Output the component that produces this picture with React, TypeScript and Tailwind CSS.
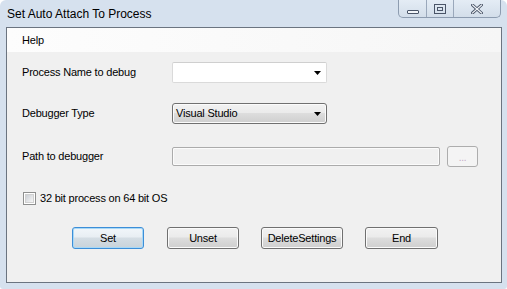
import React from 'react'

const font = { fontFamily: '"Liberation Sans", Arial, sans-serif' }

function Arrow() {
  return (
    <svg width="7" height="4" viewBox="0 0 7 4" className="shrink-0">
      <path d="M0 0H7L3.5 4Z" fill="#000" />
    </svg>
  )
}

function WinButton({ label, width, className = '', focused }: {
  label: string
  width: string
  className?: string
  focused?: boolean
}) {
  return (
    <div
      className={`h-[22px] ${width} ${className} rounded-[3px] border flex items-center justify-center text-[11px] tracking-[-0.2px] text-black ${
        focused
          ? 'border-[#3c8ed8] shadow-[inset_0_0_0_1px_#a8d8f6] bg-[linear-gradient(#f1f6fa_0%,#e8eef3_45%,#d4dde4_50%,#c9d3da_100%)]'
          : 'border-[#707070] shadow-[inset_0_0_0_1px_#fbfbfb] bg-[linear-gradient(#f2f2f2_0%,#ebebeb_45%,#dddddd_50%,#cfcfcf_100%)]'
      }`}
    >
      {label}
    </div>
  )
}

function CaptionButtons() {
  return (
    <div className="absolute left-[398px] top-0 flex h-[18px] rounded-b-[5px] border border-t-0 border-[#8d9cb0] bg-[linear-gradient(#e4ecf5,#d3deea)] overflow-hidden">
      <div className="w-[28px] flex items-center justify-center border-r border-[#9aa8bb]">
        <div className="mt-[6px] w-[12px] h-[4px] border border-[#4a5568] bg-white/70 rounded-[1px]" />
      </div>
      <div className="w-[27px] flex items-center justify-center border-r border-[#9aa8bb]">
        <div className="w-[12px] h-[10px] border border-[#4a5568] flex items-center justify-center">
          <div className="w-[6px] h-[4px] border border-[#4a5568]" />
        </div>
      </div>
      <div className="w-[46px] flex items-center justify-center">
        <svg width="12" height="10" viewBox="0 0 12 10">
          <path d="M1.5 1L10.5 9M10.5 1L1.5 9" stroke="#4a5568" strokeWidth="3" strokeLinecap="square" />
          <path d="M1.5 1L10.5 9M10.5 1L1.5 9" stroke="#f4f7fb" strokeWidth="1.2" strokeLinecap="square" />
        </svg>
      </div>
    </div>
  )
}

export default function App() {
  return (
    <div className="w-[507px] h-[289px] bg-[#d6e1ee] rounded-t-[6px] rounded-b-[3px] relative overflow-hidden" style={font}>
      <CaptionButtons />
      <div className="h-[27px] pl-[7px] flex items-center text-[12px] text-black">Set Auto Attach To Process</div>

      <div className="ml-[6px] w-[496px] h-[256px] border border-[#6b7480] bg-[#f0f0f0] flex flex-col">
        <div className="h-[24px] pl-[15px] flex items-center text-[11px] tracking-[-0.2px] bg-[linear-gradient(90deg,#fdfdfd,#f6f6f6)]">Help</div>

        <div className="pl-[15px] flex flex-col text-[11px] tracking-[-0.2px] text-black">
          <div className="mt-[10px] h-[21px] flex items-center">
            <div className="w-[150px]">Process Name to debug</div>
            <div className="w-[155px] h-[21px] bg-white border border-[#dadada] border-t-[#cfcfcf] rounded-[2px] flex items-center justify-end pr-[5px]">
              <Arrow />
            </div>
          </div>

          <div className="mt-[20px] h-[21px] flex items-center">
            <div className="w-[150px]">Debugger Type</div>
            <div className="w-[155px] h-[21px] rounded-[3px] border border-[#707070] shadow-[inset_0_0_0_1px_#fbfbfb] bg-[linear-gradient(#f2f2f2_0%,#ebebeb_45%,#dddddd_50%,#cfcfcf_100%)] flex items-center justify-between pl-[3px] pr-[5px]">
              <span>Visual Studio</span>
              <Arrow />
            </div>
          </div>

          <div className="mt-[22px] h-[21px] flex items-center">
            <div className="w-[150px]">Path to debugger</div>
            <div className="w-[268px] h-[19px] border border-[#ababab] rounded-[2px] shadow-[inset_0_0_0_1px_#fbfbfb] bg-[#f0f0f0]" />
            <div className="ml-[7px] w-[31px] h-[21px] border border-[#adadad] rounded-[3px] bg-[#f4f4f4] flex items-center justify-center text-[10px] text-[#c4a9c4] leading-none pt-[3px]">
              ...
            </div>
          </div>

          <div className="mt-[25px] h-[13px] flex items-center">
            <div className="ml-[1px] w-[13px] h-[13px] border border-[#8e8f8f] bg-white p-[1px]">
              <div className="w-full h-full border border-[#d0d0d0] bg-[linear-gradient(135deg,#cbcfd5,#f6f6f6)]" />
            </div>
            <span className="ml-[4px]">32 bit process on 64 bit OS</span>
          </div>
        </div>

        <div className="mt-[22px] pl-[65px] flex">
          <WinButton label="Set" width="w-[72px]" focused />
          <WinButton label="Unset" width="w-[72px]" className="ml-[23px]" />
          <WinButton label="DeleteSettings" width="w-[82px]" className="ml-[22px]" />
          <WinButton label="End" width="w-[73px]" className="ml-[22px]" />
        </div>
      </div>
    </div>
  )
}
